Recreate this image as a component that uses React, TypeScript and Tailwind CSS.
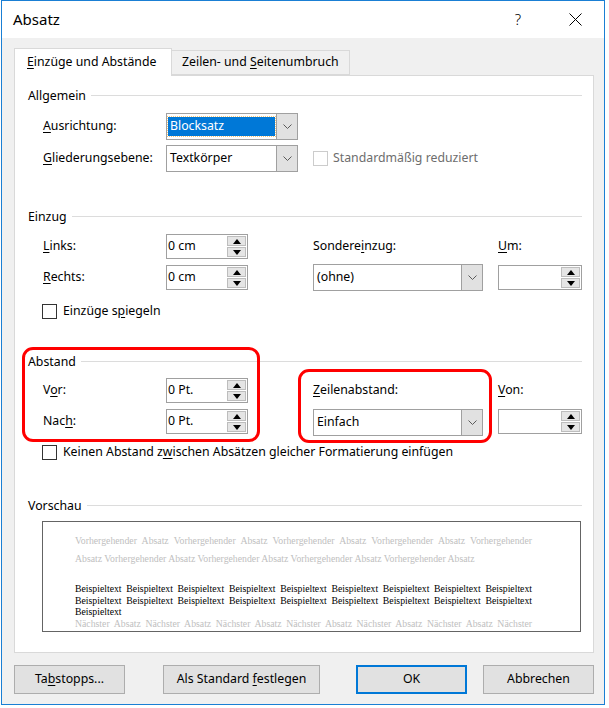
import React from 'react';

const K = ({ children }: { children: React.ReactNode }) => <span className="underline underline-offset-[2px]">{children}</span>;

function Chevron() {
    return (
        <svg width="9" height="6" viewBox="0 0 9 6">
            <polyline points="0.5,0.5 4.5,4.5 8.5,0.5" fill="none" stroke="#5a5a5a" strokeWidth="1" />
        </svg>
    );
}

function Combo({ value, width, selected }: { value: string; width: string; selected?: boolean }) {
    return (
        <div className={`flex h-[27px] border border-[#a0a0a0] bg-white ${width}`}>
            <div className="flex-1 flex items-center px-[1px]">
                {selected ? (
                    <span className="flex items-center h-[19px] w-full bg-[#0078d7] text-white px-[2px] outline outline-1 outline-dotted outline-[#f5c77e]">{value}</span>
                ) : (
                    <span className="px-[2px]">{value}</span>
                )}
            </div>
            <div className="w-[21px] bg-[#e1e1e1] border-l border-[#a0a0a0] flex items-center justify-center">
                <Chevron />
            </div>
        </div>
    );
}

function Spin({ value, width }: { value: string; width: string }) {
    return (
        <div className={`flex h-[25px] border border-[#a0a0a0] bg-white ${width}`}>
            <div className="flex-1 flex items-center pl-[1px]">{value}</div>
            <div className="flex flex-col w-[20px] py-[1px] pr-[1px] gap-[1px]">
                <div className="flex-1 bg-[#e5e5e5] border border-[#bdbdbd] flex items-center justify-center">
                    <svg width="8" height="5" viewBox="0 0 8 5"><polygon points="0,5 4,0 8,5" fill="#000" /></svg>
                </div>
                <div className="flex-1 bg-[#e5e5e5] border border-[#bdbdbd] flex items-center justify-center">
                    <svg width="8" height="5" viewBox="0 0 8 5"><polygon points="0,0 8,0 4,5" fill="#000" /></svg>
                </div>
            </div>
        </div>
    );
}

function Heading({ title, className }: { title: string; className?: string }) {
    return (
        <div className={`flex items-center h-[16px] ${className || ''}`}>
            <span>{title}</span>
            <div className="flex-1 h-px bg-[#dcdcdc] ml-[5px] -mt-[2px]" />
        </div>
    );
}

function Box({ disabled }: { disabled?: boolean }) {
    return <span className={`w-[15px] h-[15px] bg-white border ${disabled ? 'border-[#cccccc]' : 'border-[#333333]'}`} />;
}

function Btn({ children, width, className, primary }: { children: React.ReactNode; width: string; className?: string; primary?: boolean }) {
    return (
        <div className={`h-[29px] ${width} bg-[#e1e1e1] flex items-center justify-center ${primary ? 'border-2 border-[#0078d7]' : 'border border-[#adadad]'} ${className || ''}`}>
            <span>{children}</span>
        </div>
    );
}

const justified = 'text-justify [text-align-last:justify] whitespace-nowrap';

export default function App() {
    return (
        <div className="relative w-[609px] h-[708px] bg-white font-['Segoe_UI','Noto_Sans','Open_Sans',sans-serif] text-[12.3px] text-black">
            <div className="ml-[1px] w-[604px] h-[705px] border border-[#1a7fd4] flex flex-col">
                {/* Titelleiste */}
                <div className="h-[37px] bg-white flex items-center shrink-0">
                    <span className="pl-[11px] text-[15px]">Absatz</span>
                    <span className="ml-auto mr-[48px] text-[15px] font-light">?</span>
                    <svg className="mr-[22px]" width="13" height="13" viewBox="0 0 13 13">
                        <path d="M0.5 0.5 L12.5 12.5 M12.5 0.5 L0.5 12.5" stroke="#000" strokeWidth="1" />
                    </svg>
                </div>

                <div className="flex-1 bg-[#f0f0f0] pt-[10px] pl-[12px]">
                    {/* Tabs */}
                    <div className="flex items-end h-[27px]">
                        <div className="relative z-10 -mb-px h-[28px] w-[158px] bg-white border border-b-0 border-[#d9d9d9] flex items-center pl-[12px]">
                            <span><K>E</K>inzüge und Abstände</span>
                        </div>
                        <div className="h-[25px] w-[178px] bg-[#f0f0f0] border border-l-0 border-[#d9d9d9] flex items-center pl-[10px]">
                            <span>Zeilen- und <K>S</K>eitenumbruch</span>
                        </div>
                    </div>

                    {/* Panel */}
                    <div className="w-[580px] h-[578px] bg-white border border-[#d9d9d9] pl-[13px] pr-[11px] pt-[12px]">
                        <Heading title="Allgemein" />
                        <div className="pl-[15px]">
                            <div className="flex items-center mt-[9px]">
                                <span className="w-[123px]"><K>A</K>usrichtung:</span>
                                <Combo value="Blocksatz" width="w-[132px]" selected />
                            </div>
                            <div className="flex items-center mt-[5px]">
                                <span className="w-[123px]"><K>G</K>liederungsebene:</span>
                                <Combo value="Textkörper" width="w-[132px]" />
                                <span className="ml-[15px] flex"><Box disabled /></span>
                                <span className="ml-[5px] text-[#6d6d6d]">Standardmäßig reduziert</span>
                            </div>
                        </div>

                        <Heading title="Einzug" className="mt-[37px]" />
                        <div className="pl-[15px]">
                            <div className="flex items-center h-[25px] mt-[9px]">
                                <span className="w-[123px]"><K>L</K>inks:</span>
                                <Spin value="0 cm" width="w-[82px]" />
                                <span className="ml-[65px] w-[170px]">Sondere<K>i</K>nzug:</span>
                                <span className="ml-[15px]"><K>U</K>m:</span>
                            </div>
                            <div className="flex items-center h-[25px] mt-[6px]">
                                <span className="w-[123px]"><K>R</K>echts:</span>
                                <Spin value="0 cm" width="w-[82px]" />
                                <div className="ml-[65px]"><Combo value="(ohne)" width="w-[170px]" /></div>
                                <div className="ml-[15px]"><Spin value="" width="w-[84px]" /></div>
                            </div>
                            <div className="flex items-center h-[15px] mt-[14px] -ml-[1px]">
                                <Box />
                                <span className="ml-[6px]">Einzüge s<K>p</K>iegeln</span>
                            </div>
                        </div>

                        <Heading title="Abstand" className="mt-[35px]" />
                        <div className="pl-[15px]">
                            <div className="flex items-center h-[25px] mt-[8px]">
                                <span className="w-[123px]">V<K>o</K>r:</span>
                                <Spin value="0 Pt." width="w-[82px]" />
                                <span className="ml-[65px] w-[170px]"><K>Z</K>eilenabstand:</span>
                                <span className="ml-[15px]"><K>V</K>on:</span>
                            </div>
                            <div className="flex items-center h-[25px] mt-[6px]">
                                <span className="w-[123px]">Nac<K>h</K>:</span>
                                <Spin value="0 Pt." width="w-[82px]" />
                                <div className="ml-[65px] mt-[2px]"><Combo value="Einfach" width="w-[170px]" /></div>
                                <div className="ml-[15px]"><Spin value="" width="w-[84px]" /></div>
                            </div>
                            <div className="flex items-center h-[15px] mt-[11px] -ml-[1px]">
                                <Box />
                                <span className="ml-[6px]">Keinen Abstand z<K>w</K>ischen Absätzen gleicher Formatierung einfügen</span>
                            </div>
                        </div>

                        <Heading title="Vorschau" className="mt-[38px]" />
                        <div className="ml-[14px] mt-[7px] w-[539px] h-[111px] border border-[#646464] bg-white overflow-hidden pl-[32px] pt-[10px] font-['Liberation_Serif',serif] text-[9.75px]">
                            <div className="w-[457px] text-[#c0c0c0] leading-[18px]">
                                <div className={justified}>Vorhergehender Absatz Vorhergehender Absatz Vorhergehender Absatz Vorhergehender Absatz Vorhergehender</div>
                                <div className="whitespace-nowrap">Absatz Vorhergehender Absatz Vorhergehender Absatz Vorhergehender Absatz Vorhergehender Absatz</div>
                            </div>
                            <div className="w-[457px] leading-[11.5px] mt-[15px]">
                                <div className={justified}>Beispieltext Beispieltext Beispieltext Beispieltext Beispieltext Beispieltext Beispieltext Beispieltext Beispieltext</div>
                                <div className={justified}>Beispieltext Beispieltext Beispieltext Beispieltext Beispieltext Beispieltext Beispieltext Beispieltext Beispieltext</div>
                                <div>Beispieltext</div>
                                <div className={`${justified} text-[#c0c0c0]`}>Nächster Absatz Nächster Absatz Nächster Absatz Nächster Absatz Nächster Absatz Nächster Absatz Nächster</div>
                            </div>
                        </div>
                    </div>

                    {/* Buttons */}
                    <div className="flex mt-[12px]">
                        <Btn width="w-[111px]">Ta<K>b</K>stopps...</Btn>
                        <Btn width="w-[157px]" className="ml-[38px]">Als Standard <K>f</K>estlegen</Btn>
                        <Btn width="w-[111px]" className="ml-[36px]" primary>OK</Btn>
                        <Btn width="w-[111px]" className="ml-[16px]">Abbrechen</Btn>
                    </div>
                </div>
            </div>

            {/* rote Markierungen */}
            <div className="absolute left-[22px] top-[347px] w-[238px] h-[95px] border-[3px] border-[#ff0000] rounded-[11px]" />
            <div className="absolute left-[298px] top-[369px] w-[194px] h-[74px] border-[3px] border-[#ff0000] rounded-[11px]" />
        </div>
    );
}
